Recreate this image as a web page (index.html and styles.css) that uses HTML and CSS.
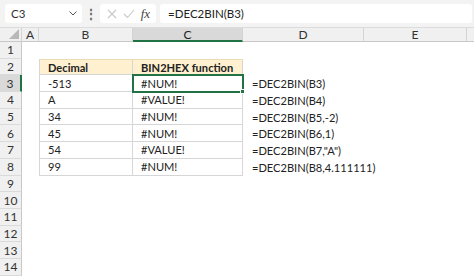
FILE: index.html
```html
<!DOCTYPE html>
<html>
<head>
<meta charset="utf-8">
<link rel="stylesheet" href="styles.css">
</head>
<body>
<div class="app">
  <div class="fbar">
    <div class="namebox"><span>C3</span><svg class="chev" width="8" height="5" viewBox="0 0 8 5"><path d="M0.5 0.5 L4 4 L7.5 0.5" fill="none" stroke="#555" stroke-width="1"/></svg></div>
    <div class="dots">⋮</div>
    <div class="fxbox">
      <svg width="10" height="10" viewBox="0 0 10 10"><path d="M1 1 L9 9 M9 1 L1 9" stroke="#c8c8c8" stroke-width="1.1"/></svg>
      <svg width="12" height="10" viewBox="0 0 12 10"><path d="M1 5 L4.5 8.5 L11 1" fill="none" stroke="#c8c8c8" stroke-width="1.1"/></svg>
      <span class="fx">fx</span>
    </div>
    <div class="formula">=DEC2BIN(B3)</div>
  </div>
  <div class="sheet">
    <div class="corner"><svg width="10" height="10" viewBox="0 0 10 10"><path d="M10 0 L10 10 L0 10 Z" fill="#b8b8b8"/></svg></div>
    <div class="ch">A</div>
    <div class="ch">B</div>
    <div class="ch sel">C</div>
    <div class="ch">D</div>
    <div class="ch">E</div>
    <div class="ch last"></div>

    <div class="rh">1</div><div></div><div></div><div></div><div></div><div></div><div></div>

    <div class="rh">2</div><div></div>
    <div class="t th tl">Decimal</div><div class="t th">BIN2HEX function</div>
    <div></div><div></div><div></div>

    <div class="rh rsel">3</div><div></div>
    <div class="t tl">-513</div><div class="t active">#NUM!<span class="handle"></span></div>
    <div class="f">=DEC2BIN(B3)</div><div></div><div></div>

    <div class="rh">4</div><div></div>
    <div class="t tl">A</div><div class="t">#VALUE!</div>
    <div class="f">=DEC2BIN(B4)</div><div></div><div></div>

    <div class="rh">5</div><div></div>
    <div class="t tl">34</div><div class="t">#NUM!</div>
    <div class="f">=DEC2BIN(B5,-2)</div><div></div><div></div>

    <div class="rh">6</div><div></div>
    <div class="t tl">45</div><div class="t">#NUM!</div>
    <div class="f">=DEC2BIN(B6,1)</div><div></div><div></div>

    <div class="rh">7</div><div></div>
    <div class="t tl">54</div><div class="t">#VALUE!</div>
    <div class="f">=DEC2BIN(B7,"A")</div><div></div><div></div>

    <div class="rh">8</div><div></div>
    <div class="t tl">99</div><div class="t">#NUM!</div>
    <div class="f">=DEC2BIN(B8,4.111111)</div><div></div><div></div>

    <div class="rh">9</div><div></div><div></div><div></div><div></div><div></div><div></div>
    <div class="rh">10</div><div></div><div></div><div></div><div></div><div></div><div></div>
    <div class="rh">11</div><div></div><div></div><div></div><div></div><div></div><div></div>
    <div class="rh">12</div><div></div><div></div><div></div><div></div><div></div><div></div>
    <div class="rh">13</div><div></div><div></div><div></div><div></div><div></div><div></div>
    <div class="rh">14</div><div></div><div></div><div></div><div></div><div></div><div></div>
  </div>
</div>
</body>
</html>
```

FILE: styles.css
```css
* { box-sizing: border-box; }
html, body { margin: 0; padding: 0; background: #fff; }
body {
  width: 474px;
  height: 279px;
  overflow: hidden;
  font-family: Lato, "Liberation Sans", sans-serif;
  font-size: 12px;
  color: #222;
}
.app { display: flex; flex-direction: column; }
.fbar {
  height: 28px;
  background: #f3f3f3;
  display: flex;
  align-items: center;
  padding: 3px 2px 3px 5px;
  border-bottom: 1px solid #dcdcdc;
}
.namebox {
  width: 77px;
  height: 19px;
  background: #fff;
  border-radius: 3px;
  display: flex;
  align-items: center;
  justify-content: space-between;
  padding: 0 5px 0 6px;
  font-size: 11.5px;
  color: #333;
}
.dots {
  width: 18px;
  text-align: center;
  color: #666;
  font-size: 12px;
  font-weight: bold;
}
.fxbox {
  width: 56px;
  height: 19px;
  background: #fff;
  border-radius: 3px;
  display: flex;
  align-items: center;
  justify-content: space-around;
  padding: 0 3px 0 4px;
}
.fx {
  font-family: "Liberation Serif", serif;
  font-style: italic;
  font-size: 13px;
  color: #444;
}
.formula {
  flex: 1;
  height: 19px;
  margin-left: 4px;
  background: #fff;
  border-radius: 3px;
  display: flex;
  align-items: center;
  padding-left: 8px;
  font-size: 11.5px;
  color: #222;
}
.sheet {
  display: grid;
  grid-template-columns: 22px 17px 94px 110px 121px 103px 7px;
  grid-template-rows: 14px repeat(14, 16.7px);
}
.corner {
  background: #f0f0f0;
  border-right: 1px solid #d4d4d4;
  border-bottom: 1px solid #c8c8c8;
  display: flex;
  align-items: flex-end;
  justify-content: flex-end;
  padding: 0 2px 2px 0;
}
.ch {
  background: #f0f0f0;
  border-right: 1px solid #d4d4d4;
  border-bottom: 1px solid #c8c8c8;
  display: flex;
  align-items: center;
  justify-content: center;
  color: #333;
  font-size: 12px;
}
.ch.last { border-right: none; }
.ch.sel {
  background: #d9d9d9;
  border-bottom: 2px solid #217346;
  color: #222;
}
.rh {
  background: #f0f0f0;
  border-right: 1px solid #c8c8c8;
  border-bottom: 1px solid #dadada;
  display: flex;
  align-items: center;
  justify-content: center;
  color: #333;
  font-size: 12px;
}
.rh.rsel {
  background: #d9d9d9;
  border-right: 2px solid #217346;
}
.t {
  border-right: 1px solid #d6d6d6;
  border-bottom: 1px solid #d6d6d6;
  display: flex;
  align-items: center;
  padding-left: 8px;
  font-size: 11.1px;
  color: #222;
  white-space: nowrap;
  position: relative;
}
.t.tl { border-left: 1px solid #d6d6d6; }
.th {
  background: #fff0cf;
  font-weight: bold;
  border-top: 1px solid #ecdcb4;
}
.active {
  outline: 2px solid #217346;
  outline-offset: -1px;
  z-index: 1;
}
.handle {
  position: absolute;
  right: -3px;
  bottom: -3px;
  width: 5px;
  height: 5px;
  background: #217346;
  border: 1px solid #fff;
}
.f {
  display: flex;
  align-items: center;
  padding-left: 9px;
  font-size: 11.1px;
  color: #222;
  white-space: nowrap;
}
```
